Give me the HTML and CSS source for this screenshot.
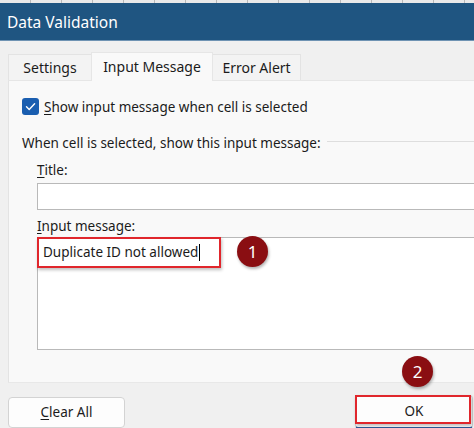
FILE: index.html
```html
<!DOCTYPE html>
<html>
<head>
<meta charset="utf-8">
<link rel="stylesheet" href="styles.css">
</head>
<body>
<div class="backdrop"></div>
<div class="titlebar">Data Validation</div>
<div class="dialog">
  <div class="tabs">
    <div class="tab">Settings</div>
    <div class="tab active">Input Message</div>
    <div class="tab">Error Alert</div>
  </div>
  <div class="panel">
    <div class="check-row">
      <span class="checkbox"><svg width="17" height="17" viewBox="0 0 17 17"><path d="M4.5 8.8 L7.2 11.4 L12.6 5.8" fill="none" stroke="#fff" stroke-width="1.4" stroke-linecap="round" stroke-linejoin="round"/></svg></span>
      <span class="label"><u>S</u>how input message when cell is selected</span>
    </div>
    <div class="group-head">
      <span class="group-label">When cell is selected, show this input message:</span>
      <span class="group-line"></span>
    </div>
    <div class="field-label"><u>T</u>itle:</div>
    <div class="input"></div>
    <div class="field-label"><u>I</u>nput message:</div>
    <div class="textarea">
      <span class="msg">Duplicate ID not allowed<span class="caret"></span></span>
      <span class="hilite hl-msg"></span>
      <span class="badge b1">1</span>
    </div>
  </div>
  <div class="buttons">
    <div class="btn clear"><u>C</u>lear All</div>
    <div class="btn ok">OK
      <span class="hilite hl-ok"></span>
      <span class="badge b2">2</span>
    </div>
  </div>
</div>
</body>
</html>
```
FILE: styles.css
```css
html, body {
  margin: 0;
  padding: 0;
}
body {
  width: 474px;
  height: 428px;
  overflow: hidden;
  background: #f0f0f0;
  font-family: "Noto Sans", "Open Sans", "DejaVu Sans", sans-serif;
  color: #1b1b1b;
}
.backdrop {
  height: 3px;
  background: repeating-linear-gradient(90deg, #e9e9e9 0 30px, #b8b8b8 30px 31px);
}
.titlebar {
  height: 38px;
  box-sizing: border-box;
  background: #1f5581;
  color: #ffffff;
  font-size: 15.5px;
  line-height: 38px;
  padding-left: 7px;
  border-bottom: 1px solid #6f93b3;
}
.dialog {
  position: relative;
  padding-left: 8px;
}
.tabs {
  display: flex;
  align-items: flex-end;
  height: 39px;
}
.tab {
  box-sizing: border-box;
  height: 26px;
  line-height: 26px;
  font-size: 14px;
  text-align: center;
  background: #f3f3f3;
  border: 1px solid #e3e3e3;
  border-bottom: none;
  color: #1b1b1b;
}
.tab:nth-child(1) { width: 84px; }
.tab:nth-child(3) { width: 89px; }
.tab.active {
  width: 122px;
  height: 29px;
  line-height: 27px;
  background: #f9f9f9;
  border-color: #e6e6e6;
  position: relative;
  top: 1px;
  margin: 0 -1px;
  z-index: 1;
}
.panel {
  box-sizing: border-box;
  height: 303px;
  background: #f9f9f9;
  border-top: 1px solid #e6e6e6;
  border-left: 1px solid #e3e3e3;
  border-bottom: 1px solid #e8e8e8;
  padding: 17px 0 0 13px;
  font-size: 13.5px;
}
.check-row {
  display: flex;
  align-items: center;
  gap: 5px;
  height: 17px;
}
.checkbox {
  width: 17px;
  height: 17px;
  border-radius: 3px;
  background: #1a5eb0;
  display: inline-flex;
}
.label u, .field-label u, .btn u {
  text-decoration-thickness: 1px;
  text-underline-offset: 2px;
}
.group-head {
  display: flex;
  align-items: center;
  margin-top: 19px;
  height: 18px;
}
.group-label {
  white-space: nowrap;
}
.group-line {
  flex: 1;
  height: 1px;
  background: #dedede;
  margin-left: 6px;
  margin-top: -3px;
}
.field-label {
  margin-left: 15px;
  margin-top: 9px;
  height: 18px;
  line-height: 18px;
}
.input {
  margin-left: 15px;
  margin-top: 4px;
  height: 27px;
  box-sizing: border-box;
  background: #ffffff;
  border: 1px solid #b9b9b9;
  border-right: none;
}
.input + .field-label {
  margin-top: 7px;
}
.textarea {
  position: relative;
  margin-left: 15px;
  margin-top: 2px;
  height: 113px;
  box-sizing: border-box;
  background: #ffffff;
  border: 1px solid #b9b9b9;
  border-right: none;
  padding: 4px 0 0 5px;
  font-size: 13.5px;
}
.msg {
  position: relative;
  display: inline-block;
  line-height: 20px;
}
.caret {
  display: inline-block;
  width: 1px;
  height: 17px;
  background: #000;
  vertical-align: -4px;
  margin-left: 1px;
}
.hilite {
  position: absolute;
  box-sizing: border-box;
  border: 2px solid #e0262c;
  box-shadow: 1px 2px 3px rgba(0,0,0,0.25);
  pointer-events: none;
}
.hl-msg {
  left: -1px;
  top: -1px;
  width: 184px;
  height: 31px;
}
.badge {
  position: absolute;
  width: 31px;
  height: 31px;
  border-radius: 50%;
  background: #8a0e12;
  color: #ffffff;
  font-size: 17px;
  line-height: 31px;
  text-align: center;
  box-shadow: 1px 2px 3px rgba(0,0,0,0.3);
}
.b1 {
  left: 199px;
  top: -2px;
}
.buttons {
  display: flex;
  justify-content: space-between;
  align-items: flex-start;
  padding-top: 12px;
}
.btn {
  position: relative;
  box-sizing: border-box;
  height: 31px;
  background: #fdfdfd;
  border: 1px solid #d3d3d3;
  border-radius: 4px;
  font-size: 13.5px;
  line-height: 29px;
  text-align: center;
}
.clear {
  width: 117px;
  margin-top: 2px;
}
.ok {
  width: 118px;
  height: 34px;
  margin-top: 0;
  margin-right: 1px;
  border-bottom: 2px solid #2c5a9a;
  line-height: 30px;
  border-radius: 4px;
}
.hl-ok {
  left: -1px;
  top: -1px;
  width: 116px;
  height: 29px;
}
.b2 {
  left: 46px;
  top: -40px;
}
```
